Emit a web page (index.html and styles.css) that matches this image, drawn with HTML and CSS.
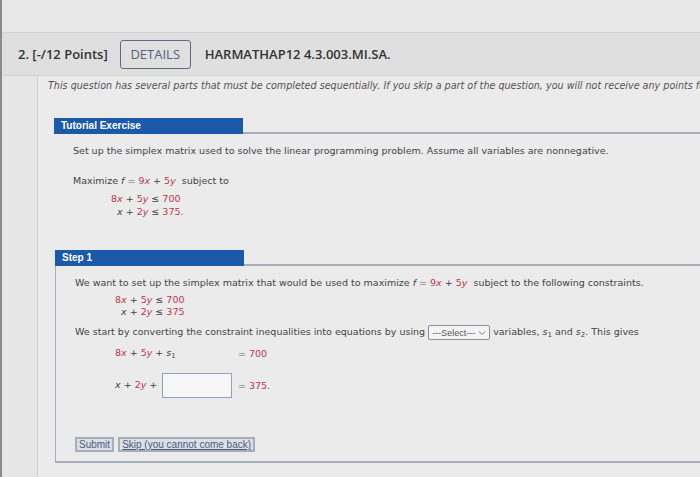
FILE: index.html
```html
<!DOCTYPE html>
<html lang="en">
<head>
    <meta charset="UTF-8">
    <title>HARMATHAP12 4.3.003.MI.SA.</title>
    <link rel="stylesheet" href="styles.css">
</head>
<body>
    <div class="page">
        <div class="top-strip"></div>
        <div class="q-header">
            <span class="q-num">2. [-/12 Points]</span>
            <button class="details">DETAILS</button>
            <span class="q-code">HARMATHAP12 4.3.003.MI.SA.</span>
        </div>
        <div class="q-body">
            <div class="gutter"></div>
            <div class="content">
                <p class="notice">This question has several parts that must be completed sequentially. If you skip a part of the question, you will not receive any points for the skipped part, and you will not be able to come back to the skipped part.</p>

                <div class="tutorial">
                    <div class="sec-head">
                        <span class="tag">Tutorial Exercise</span>
                        <span class="rule"></span>
                    </div>
                    <p class="intro">Set up the simplex matrix used to solve the linear programming problem. Assume all variables are nonnegative.</p>
                    <p class="maximize">Maximize <i>f</i> <span class="op">=</span> <span class="n">9</span><i class="n">x</i> + <span class="n">5</span><i class="n">y</i>&nbsp; subject to</p>
                    <div class="system">
                        <div><span class="n">8</span><i class="n">x</i> + <span class="n">5</span><i class="n">y</i> &le; <span class="n">700</span></div>
                        <div>&nbsp;&nbsp;<i>x</i> + <span class="n">2</span><i class="n">y</i> &le; <span class="n">375.</span></div>
                    </div>
                </div>

                <div class="step">
                    <div class="sec-head">
                        <span class="tag">Step 1</span>
                        <span class="rule"></span>
                    </div>
                    <div class="step-body">
                        <p class="line">We want to set up the simplex matrix that would be used to maximize <i>f</i> <span class="op">=</span> <span class="n">9</span><i class="n">x</i> + <span class="n">5</span><i class="n">y</i>&nbsp; subject to the following constraints.</p>
                        <div class="system small">
                            <div><span class="n">8</span><i class="n">x</i> + <span class="n">5</span><i class="n">y</i> &le; <span class="n">700</span></div>
                            <div>&nbsp;&nbsp;<i>x</i> + <span class="n">2</span><i class="n">y</i> &le; <span class="n">375</span></div>
                        </div>
                        <p class="line">We start by converting the constraint inequalities into equations by using <span class="pick">---Select---<svg width="8" height="6" viewBox="0 0 8 6"><path d="M1 1.5 L4 4.5 L7 1.5" fill="none" stroke="#777" stroke-width="1"/></svg></span> variables, <i>s</i><sub>1</sub> and <i>s</i><sub>2</sub>. This gives</p>
                        <div class="eqs">
                            <div class="eq">
                                <span class="lhs"><span class="n">8</span><i class="n">x</i> + <span class="n">5</span><i class="n">y</i> + <i>s</i><sub>1</sub></span>
                                <span class="rhs"><span class="op">=</span> <span class="n">700</span></span>
                            </div>
                            <div class="eq second">
                                <span class="lhs"><i>x</i> + <span class="n">2</span><i class="n">y</i> + <input type="text" class="blank"></span>
                                <span class="rhs"><span class="op">=</span> <span class="n">375.</span></span>
                            </div>
                        </div>
                        <div class="actions">
                            <button class="btn">Submit</button>
                            <button class="btn link">Skip (you cannot come back)</button>
                        </div>
                    </div>
                </div>
            </div>
        </div>
    </div>
</body>
</html>
```

FILE: styles.css
```css
body {
    margin: 0;
    padding: 0;
    background-color: #e6e6e6;
    font-family: "DejaVu Sans", Verdana, sans-serif;
    color: #444;
}
.page {
    border-left: 2px solid #8a8a8a;
    min-height: 477px;
    overflow: hidden;
}
.top-strip {
    height: 32px;
    background-color: #e7e7e7;
}
.q-header {
    display: flex;
    align-items: center;
    height: 42px;
    padding-left: 16px;
    background-color: #dfdfdf;
    border-top: 1px solid #d2d2d2;
    border-bottom: 1px solid #d2d2d2;
    font-family: "Open Sans", sans-serif;
    white-space: nowrap;
}
.q-num {
    font-size: 13px;
    font-weight: 600;
    color: #333;
}
.details {
    margin-left: 12px;
    width: 71px;
    height: 29px;
    background: transparent;
    border: 1.5px solid #5d6b86;
    border-radius: 3px;
    font-family: "Open Sans", sans-serif;
    font-size: 13px;
    color: #55607a;
    padding: 0;
}
.q-code {
    margin-left: 14px;
    font-size: 13px;
    font-weight: 600;
    color: #333;
}
.q-body {
    display: flex;
}
.gutter {
    width: 35px;
    flex-shrink: 0;
    border-right: 1px solid #cfcfcf;
    min-height: 400px;
}
.content {
    flex: 1;
    min-width: 0;
    background-color: #ebebeb;
    padding: 4px 0 0 10px;
}
p {
    margin: 0;
}
.notice {
    font-style: italic;
    font-size: 9.6px;
    color: #555;
    white-space: nowrap;
    overflow: hidden;
}
.tutorial {
    margin: 27px 0 0 6px;
}
.sec-head {
    display: flex;
    align-items: flex-end;
}
.tag {
    width: 175px;
    flex-shrink: 0;
    background-color: #1c59a8;
    color: #fff;
    font-family: "Liberation Sans", Arial, sans-serif;
    font-weight: bold;
    font-size: 10px;
    padding: 2px 7px 3px;
}
.rule {
    flex: 1;
    border-bottom: 2px solid #a9abba;
}
.intro {
    margin: 11px 0 0 19px;
    font-size: 9.5px;
}
.maximize {
    margin: 19px 0 0 19px;
    font-size: 9.5px;
}
.n {
    color: #b83a4b;
}
.op {
    color: #666;
}
.system {
    margin: 6px 0 0 57px;
    font-size: 9.5px;
    line-height: 13px;
}
.step {
    margin: 32px 0 0 7px;
    border-left: 1px solid #a9abba;
    border-bottom: 2px solid #a9abba;
}
.step .tag {
    margin-left: -1px;
}
.step-body {
    padding: 10px 0 9px 19px;
    font-size: 9.5px;
}
.line {
    line-height: 14px;
}
.system.small {
    margin: 4px 0 7px 40px;
    line-height: 12px;
}
.pick {
    display: inline-flex;
    align-items: center;
    gap: 3px;
    font-family: "Liberation Sans", Arial, sans-serif;
    font-size: 9px;
    height: 13px;
    padding: 0 3px;
    border: 1px solid #8b8f99;
    border-radius: 2px;
    background: #f4f4f4;
    color: #555;
    vertical-align: middle;
}
sub {
    font-size: 7px;
    vertical-align: -2px;
}
.eqs {
    margin: 5px 0 0 40px;
}
.eq {
    display: flex;
    align-items: center;
}
.eq.second {
    margin-top: 13px;
}
.lhs {
    width: 123px;
}
.blank {
    width: 70px;
    height: 25px;
    box-sizing: border-box;
    border: 1px solid #8fa3c0;
    background: #f6f6f6;
    margin-left: 2px;
    vertical-align: middle;
}
.actions {
    margin-top: 39px;
    display: flex;
    gap: 4px;
}
.btn {
    font-family: "Liberation Sans", Arial, sans-serif;
    font-size: 10px;
    color: #4b5c80;
    background: #dcdfe6;
    border: 2px solid #a9adb8;
    padding: 0 2px;
    height: 15px;
}
.btn.link {
    text-decoration: underline;
}
```
